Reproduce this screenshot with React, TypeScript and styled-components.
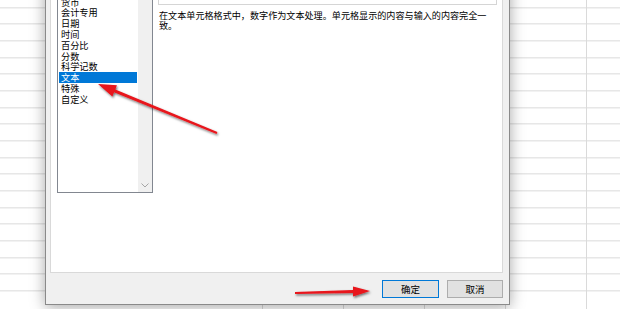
import React from 'react'
import styled, { createGlobalStyle } from 'styled-components'

const GlobalStyle = createGlobalStyle`
  html, body {
    margin: 0;
    padding: 0;
    background: #fff;
  }
  body {
    font-family: "Noto Sans CJK SC", "Noto Sans", sans-serif;
  }
`

const categories = [
  '货币',
  '会计专用',
  '日期',
  '时间',
  '百分比',
  '分数',
  '科学记数',
  '文本',
  '特殊',
  '自定义',
]

const Sheet = styled.div`
  position: relative;
  width: 620px;
  height: 309px;
  overflow: hidden;
  display: flex;
  background-color: #fff;
  background-image: repeating-linear-gradient(
    to bottom,
    transparent 0,
    transparent 15.67px,
    #dadada 15.67px,
    #dadada 16.67px
  );
  background-position: 0 -8.67px;
`

const SheetColumn = styled.div<{ $w?: number }>`
  flex: ${(p) => (p.$w ? `0 0 ${p.$w}px` : '1')};
  border-right: ${(p) => (p.$w ? '1px solid #dadada' : 'none')};
`

const Dialog = styled.div`
  position: absolute;
  left: 45px;
  top: -30px;
  width: 465px;
  height: 335px;
  box-sizing: border-box;
  border: 1px solid #8a8a8a;
  background: #f0f0f0;
  box-shadow: 0 2px 14px rgba(0, 0, 0, 0.35);
  display: flex;
  flex-direction: column;
  padding: 3px 6px 0 4px;
`

const TabPage = styled.div`
  height: 299px;
  box-sizing: border-box;
  background: #fff;
  border: 1px solid #d9d9d9;
  display: flex;
  align-items: flex-start;
  gap: 5px;
  padding: 19.5px 5px 0 6px;
`

const ListBox = styled.div`
  width: 96px;
  height: 198.5px;
  box-sizing: border-box;
  border: 1px solid #828790;
  display: flex;
`

const ListItems = styled.div`
  flex: 1;
  padding: 1px;
`

const ListItem = styled.div<{ $selected?: boolean }>`
  height: 10.83px;
  line-height: 10.83px;
  font-size: 9.2px;
  padding-left: 2px;
  white-space: nowrap;
  color: ${(p) => (p.$selected ? '#fff' : '#000')};
  background: ${(p) => (p.$selected ? '#0078d7' : 'transparent')};
`

const ScrollTrack = styled.div`
  width: 14px;
  background: #f0f0f0;
  display: flex;
  flex-direction: column;
  justify-content: flex-end;
  align-items: center;
  padding-bottom: 4px;
  box-sizing: border-box;
`

const Detail = styled.div`
  flex: 1;
  display: flex;
  flex-direction: column;
`

const SampleBox = styled.div`
  height: 10.5px;
  box-sizing: border-box;
  border: 1px solid #d5d5d5;
  border-top: none;
`

const Description = styled.div`
  width: 332px;
  margin-top: 4.75px;
  padding-left: 1px;
  font-size: 9.1px;
  line-height: 10.5px;
  color: #000;
`

const Footer = styled.div`
  height: 31px;
  box-sizing: border-box;
  display: flex;
  justify-content: flex-end;
  align-items: flex-start;
  gap: 8px;
  padding-top: 7px;
`

const Button = styled.div<{ $primary?: boolean; $w: number }>`
  width: ${(p) => p.$w}px;
  height: 18px;
  box-sizing: border-box;
  display: flex;
  align-items: center;
  justify-content: center;
  background: #e1e1e1;
  border: 1px solid ${(p) => (p.$primary ? '#0078d7' : '#adadad')};
  font-size: 9.5px;
  color: #000;
`

const Annotations = styled.svg`
  position: absolute;
  left: 0;
  top: 0;
  pointer-events: none;
`

const App = () => (
  <>
    <GlobalStyle />
    <Sheet>
      <SheetColumn $w={262} />
      <SheetColumn $w={80} />
      <SheetColumn $w={80} />
      <SheetColumn $w={80} />
      <SheetColumn $w={80} />
      <SheetColumn />

      <Dialog>
        <TabPage>
          <ListBox>
            <ListItems>
              {categories.map((name) => (
                <ListItem key={name} $selected={name === '文本'}>
                  {name}
                </ListItem>
              ))}
            </ListItems>
            <ScrollTrack>
              <svg width='8' height='5' viewBox='0 0 8 5'>
                <path d='M0.5 0.5 L4 4 L7.5 0.5' fill='none' stroke='#a6a6a6' strokeWidth='1' />
              </svg>
            </ScrollTrack>
          </ListBox>
          <Detail>
            <SampleBox />
            <Description>
              在文本单元格格式中，数字作为文本处理。单元格显示的内容与输入的内容完全一致。
            </Description>
          </Detail>
        </TabPage>
        <Footer>
          <Button $primary $w={57}>确定</Button>
          <Button $w={56}>取消</Button>
        </Footer>
      </Dialog>

      <Annotations width='620' height='309' viewBox='0 0 620 309'>
        <defs>
          <filter id='arrowShadow' x='-20%' y='-50%' width='140%' height='200%'>
            <feDropShadow dx='1' dy='1.5' stdDeviation='1.2' floodColor='#000' floodOpacity='0.55' />
          </filter>
        </defs>
        <path
          d='M98 84 L116.9 85.3 L115.3 89.4 L217.4 132.1 L216.6 133.9 L114 92.3 L112.4 96.4 Z'
          fill='#e8131a'
          filter='url(#arrowShadow)'
        />
        <path
          d='M370 291 L353 286.5 L353 290 L295 292 L295 294 L353 293 L353 296.5 Z'
          fill='#e8131a'
          filter='url(#arrowShadow)'
        />
      </Annotations>
    </Sheet>
  </>
)

export default App
